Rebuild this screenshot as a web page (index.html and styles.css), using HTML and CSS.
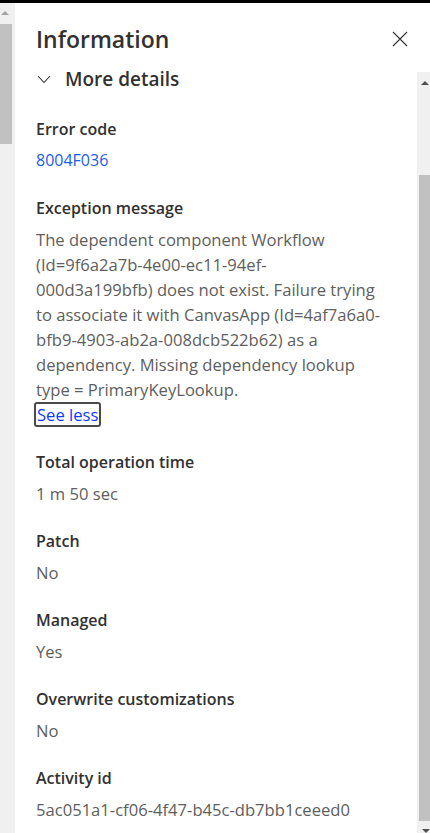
FILE: index.html
```html
<!DOCTYPE html>
<html lang="en">
<head>
<meta charset="utf-8">
<title>Information</title>
<link rel="stylesheet" href="styles.css">
</head>
<body>
<div class="topbar"></div>
<div class="frame">
  <div class="side-scroll">
    <span class="arrow-up"></span>
    <div class="side-thumb"></div>
  </div>
  <div class="panel">
    <div class="content">
      <div class="head">
        <h1 class="title">Information</h1>
        <button class="close" aria-label="Close">
          <svg width="16" height="16" viewBox="0 0 16 16"><path d="M1 1 L15 15 M15 1 L1 15" stroke="#323130" stroke-width="1.1" fill="none"/></svg>
        </button>
      </div>
      <div class="more">
        <svg class="chev" width="14" height="9" viewBox="0 0 14 9"><path d="M1 1 L7 7.5 L13 1" stroke="#323130" stroke-width="1.1" fill="none"/></svg>
        <span>More details</span>
      </div>
      <div class="section">
        <div class="label">Error code</div>
        <div class="value link">8004F036</div>
      </div>
      <div class="section">
        <div class="label">Exception message</div>
        <div class="value msg">The dependent component Workflow<br>(Id=9f6a2a7b-4e00-ec11-94ef-<br>000d3a199bfb) does not exist. Failure trying<br>to associate it with CanvasApp (Id=4af7a6a0-<br>bfb9-4903-ab2a-008dcb522b62) as a<br>dependency. Missing dependency lookup<br>type = PrimaryKeyLookup.</div>
        <a class="see-less" href="#">See less</a>
      </div>
      <div class="section">
        <div class="label">Total operation time</div>
        <div class="value">1 m 50 sec</div>
      </div>
      <div class="section">
        <div class="label">Patch</div>
        <div class="value">No</div>
      </div>
      <div class="section">
        <div class="label">Managed</div>
        <div class="value">Yes</div>
      </div>
      <div class="section">
        <div class="label">Overwrite customizations</div>
        <div class="value">No</div>
      </div>
      <div class="section">
        <div class="label">Activity id</div>
        <div class="value">5ac051a1-cf06-4f47-b45c-db7bb1ceeed0</div>
      </div>
    </div>
    <div class="vscroll">
      <span class="arrow-up"></span>
      <div class="vthumb"></div>
      <span class="arrow-down"></span>
    </div>
  </div>
</div>
</body>
</html>
```
FILE: styles.css
```css
html, body {
  margin: 0;
  padding: 0;
  background: #ffffff;
  height: 833px;
  overflow: hidden;
  font-family: "Open Sans", "Noto Sans", sans-serif;
  color: #323130;
}

.topbar {
  height: 3px;
  background: #000000;
}

.frame {
  display: flex;
  height: 830px;
}

.side-scroll {
  width: 15px;
  background: #f0f0f0;
  display: flex;
  flex-direction: column;
  align-items: flex-start;
  flex-shrink: 0;
}

.side-scroll .arrow-up {
  margin: 8px 0 0 1px;
  border-bottom-color: #a3a3a3;
}

.arrow-up {
  display: block;
  width: 0;
  height: 0;
  border-left: 4px solid transparent;
  border-right: 4px solid transparent;
  border-bottom: 4px solid #505050;
}

.arrow-down {
  display: block;
  width: 0;
  height: 0;
  border-left: 4px solid transparent;
  border-right: 4px solid transparent;
  border-top: 4px solid #505050;
}

.side-thumb {
  margin-top: 9px;
  width: 12px;
  height: 120px;
  background: #c1c1c1;
}

.panel {
  flex: 1;
  display: flex;
  min-width: 0;
}

.content {
  flex: 1;
  padding: 20px 8px 0 21px;
  min-width: 0;
}

.head {
  display: flex;
  align-items: center;
  justify-content: space-between;
}

.title {
  margin: 0;
  font-size: 23px;
  line-height: 32px;
  font-weight: 600;
  color: #323130;
}

.close {
  border: none;
  background: none;
  padding: 0;
  margin-right: 1px;
  width: 16px;
  height: 16px;
  display: flex;
}

.more {
  display: flex;
  align-items: center;
  gap: 14px;
  margin-top: 10px;
  font-size: 19px;
  line-height: 28px;
  font-weight: 600;
  color: #323130;
}

.chev {
  margin-left: 1px;
}

.section {
  margin-top: 24px;
}

.more + .section {
  margin-top: 25px;
}

.label {
  font-size: 16px;
  line-height: 22px;
  font-weight: 600;
  color: #323130;
}

.value {
  margin-top: 8px;
  font-size: 16.6px;
  line-height: 25px;
  color: #605e5c;
}

.value.link {
  font-size: 16px;
  color: #1a5cf0;
}

.msg {
  white-space: nowrap;
}

.see-less {
  display: inline-block;
  vertical-align: top;
  margin-left: -2px;
  padding: 0 1px;
  font-size: 16.6px;
  line-height: 21px;
  color: #0a3cff;
  text-decoration: none;
  border: 2px solid #4a4a4a;
  border-radius: 3px;
}

.vscroll {
  width: 13px;
  margin-top: 69px;
  background: #f0f0f0;
  display: flex;
  flex-direction: column;
  align-items: flex-end;
  flex-shrink: 0;
}

.vscroll .arrow-up {
  margin: 9px 1px 0 0;
}

.vthumb {
  margin-top: 90px;
  width: 11px;
  height: 649px;
  background: #c1c1c1;
}

.vscroll .arrow-down {
  margin: 8px 0 0 0;
}
```
